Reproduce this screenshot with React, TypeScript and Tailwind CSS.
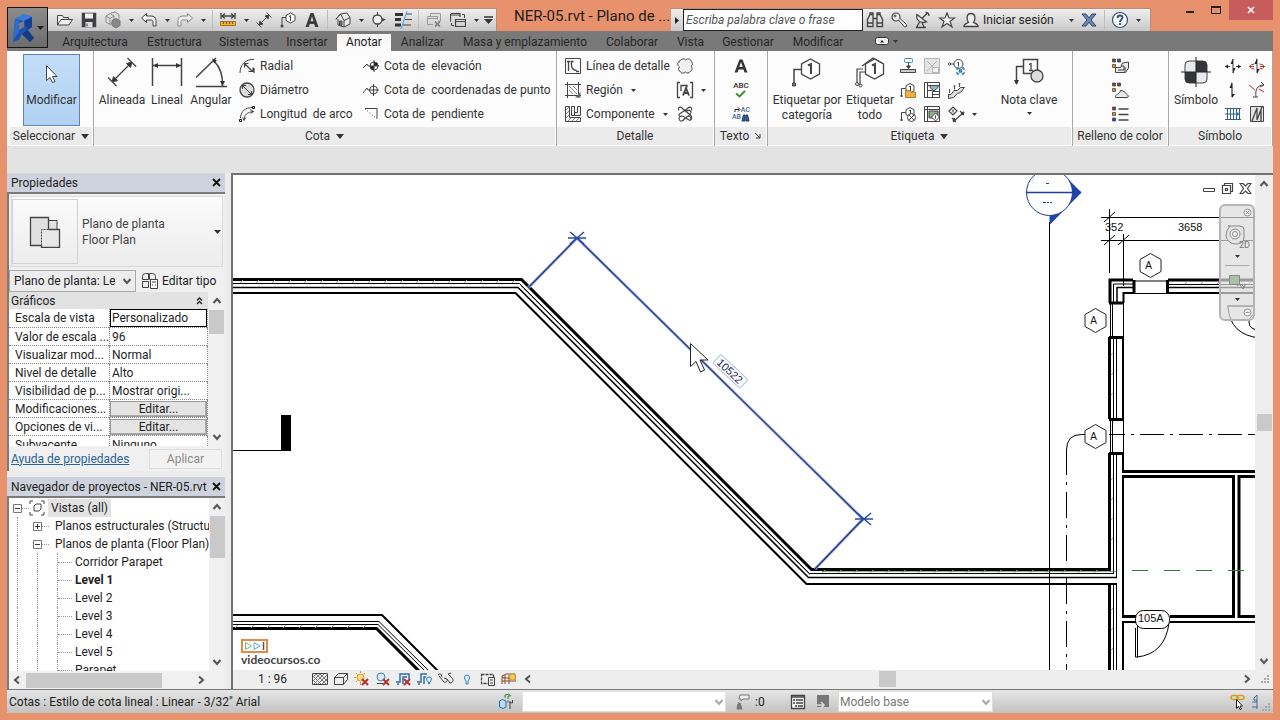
import type { ReactNode } from "react";

type IconProps = { size?: number; w?: number; h?: number; children: ReactNode; color?: string };

function Icon({ size = 18, w, h, children, color = "#444" }: IconProps) {
  return (
    <svg
      width={w ?? size}
      height={h ?? size}
      viewBox={`0 0 ${w ?? size} ${h ?? size}`}
      fill="none"
      stroke={color}
      className="shrink-0"
      aria-hidden="true"
    >
      {children}
    </svg>
  );
}

function Down({ big }: { big?: boolean }) {
  return big ? (
    <Icon w={8} h={5} color="none"><path d="M0 0h8L4 5z" fill="#333" /></Icon>
  ) : (
    <Icon w={5} h={3} color="none"><path d="M0 0h5L2.5 3z" fill="#333" /></Icon>
  );
}

function Tool({ label, children }: { label: string; children: ReactNode }) {
  return (
    <button aria-label={label} className="flex h-full w-6 shrink-0 items-center justify-center">
      {children}
    </button>
  );
}

function Drop({ label }: { label: string }) {
  return (
    <button aria-label={label} className="flex h-full w-3 shrink-0 items-center justify-center">
      <Down />
    </button>
  );
}

function Sep() {
  return <span className="mx-[3px] h-5 w-px shrink-0 bg-[#bdbdbd]" />;
}

function Chevron({ dir }: { dir: "up" | "down" | "left" | "right" }) {
  const paths = {
    up: "M1.5 7L5 3l3.500 4",
    down: "M1.5 3L5 7l3.500-4",
    left: "M7 1.500L3 5l4 3.500",
    right: "M3 1.500L7 5 3 8.500",
  };
  return <Icon size={10} color="#555"><path d={paths[dir]} strokeWidth="2" /></Icon>;
}

/* ---------- quick access bar ---------- */

function QuickAccess() {
  return (
    <div className="ml-[41px] flex h-[23px] w-[449px] shrink-0 items-center self-end border-r border-t border-[#b98c78] bg-linear-to-b from-[#efefef] to-[#c9c9c9] pl-[5px]">
      <Tool label="Abrir">
        <Icon><path d="M1.500 14V4.500h5l1 2h5v2M1.500 14l3.500-5.500h11.500L13 14z" fill="#eee" /></Icon>
      </Tool>
      <Tool label="Guardar">
        <Icon size={16}><path d="M1.500 1.500h13v13h-13z" fill="#3d3d42" strokeWidth="1.500" /><path d="M4 1.500h8v5H4z" fill="#f3f3f3" stroke="none" /><path d="M4.500 10h7v5h-7z" fill="#ddd" stroke="none" /><path d="M6 11.500v3" /></Icon>
      </Tool>
      <Tool label="Sincronizar">
        <Icon color="#8a8a8a"><path d="M2 5l4-2.500L10 5v6l-4 2.500L2 11zM2 5l4 2.500L10 5M6 7.500v6M7 2l4-1 4 2.500v4" fill="#dedede" /><path d="M8 9.500l4-2 4 2v5L12 17l-4-2.500z" fill="#888" stroke="#777" /></Icon>
      </Tool>
      <Drop label="Opciones de sincronizar" />
      <Tool label="Deshacer">
        <Icon w={18} h={16}><path d="M1.500 6l5-4.500V4H11c3 0 5 1.500 5 4.500V14h-3V9.500C13 8.500 12.500 8 11 8H6.500v2.500z" fill="#f5f5f5" /></Icon>
      </Tool>
      <Drop label="Lista deshacer" />
      <Tool label="Rehacer">
        <Icon w={18} h={16} color="#888"><path d="M16.500 6l-5-4.500V4H7C4 4 2 5.500 2 8.500V14h3V9.500C5 8.500 5.500 8 7 8h4.500v2.500z" fill="#eee" /></Icon>
      </Tool>
      <Drop label="Lista rehacer" />
      <Sep />
      <Tool label="Medir">
        <Icon w={18} h={16}><path d="M2 1v6M16 1v6M3 4h12M6 1.500L3 4l3 2.500M12 1.500L15 4l-3 2.500" strokeWidth="1.300" /><path d="M1.500 9.500h15v4h-15z" fill="#e9b23a" stroke="#a8701c" /><path d="M4.500 10v2M7.500 10v2M10.500 10v2M13.500 10v2" stroke="#7a4d10" /></Icon>
      </Tool>
      <Drop label="Opciones de medir" />
      <Tool label="Cota alineada">
        <Icon size={16}><path d="M3 13L13 3M.5 10.500l5 5M10.500.5l5 5" /><path d="M3 13l1-4 3 3zM13 3l-1 4-3-3z" fill="#444" /></Icon>
      </Tool>
      <Tool label="Etiquetar">
        <Icon size={16}><path d="M2 14V5.500h5" /><circle cx="2" cy="14" r="1.500" fill="#444" stroke="none" /><path d="M10.500 1l4.500 2.500v5L10.500 11 6 8.500v-5z" fill="#fff" /><path d="M9 4.500l1.500-1V9" /></Icon>
      </Tool>
      <Tool label="Texto">
        <Icon size={16} color="none"><path d="M1.500 15L6.500 1h3l5 14h-3.300l-1-3h-4.500l-1 3zM6.500 9.300h3L8 4.500z" fill="#3c3c3c" /></Icon>
      </Tool>
      <Sep />
      <Tool label="Vista 3D">
        <Icon size={16}><path d="M1 7l4.500-5L12 1l3 4.500V12l-6 3-6-2V7" fill="#e9e9e9" /><path d="M1 7.500L5.500 2 9 8.500V15M9 8.500l6-3" /><path d="M4.500 9h2.500v4.500L4.500 13z" fill="#777" /></Icon>
      </Tool>
      <Drop label="Opciones de vista 3D" />
      <Tool label="Sección">
        <Icon size={16}><path d="M2.500 3L15 7.500 6 12z" fill="#444" stroke="none" /><circle cx="6.500" cy="7.500" r="4.500" fill="#f2f2f2" strokeWidth="1.300" /><path d="M6.500 12v3M6.500 0v3" /></Icon>
      </Tool>
      <Tool label="Líneas finas">
        <Icon size={18}><path d="M1 3.500h8M1 8.500h6M1 14h6" stroke="#333" strokeWidth="3" /><path d="M12 3h6M11 8.500h7M9 14h8" /><path d="M13 0L7 18" stroke="#4a9be0" /></Icon>
      </Tool>
      <Sep />
      <Tool label="Cerrar ocultas">
        <Icon size={16} color="#999"><path d="M4.500 4V1.500h10V9H12M1.500 4.500h10v3M1.500 4.500v8H7M1.500 6.500h10" /><path d="M9 9.500l5 5M14 9.500l-5 5" stroke="#777" strokeWidth="1.500" /></Icon>
      </Tool>
      <Tool label="Cambiar ventanas">
        <Icon size={16}><path d="M1 1.500h9V5M.5 9.500V2M1 3h9M5.500 7.500h10v7h-10zM5.500 9.500h10" strokeWidth="1.200" /><path d="M12 2.500h2.500V6M4 13.500H1.500V11" /></Icon>
      </Tool>
      <Drop label="Lista de ventanas" />
      <button aria-label="Personalizar" className="flex h-full w-3 items-center justify-center">
        <Icon w={9} h={8} color="#333"><path d="M0 1h9" strokeWidth="1.500" /><path d="M0 3h9L4.500 8z" fill="#333" stroke="none" /></Icon>
      </button>
    </div>
  );
}

function InfoBar() {
  return (
    <div className="flex h-[23px] w-[480px] shrink-0 items-center self-end border-r border-t border-[#b98c78] bg-linear-to-b from-[#efefef] to-[#c9c9c9]">
      <button aria-label="Contraer" className="flex h-full w-3 items-center justify-center">
        <Icon w={4} h={7} color="none"><path d="M0 0l4 3.500L0 7z" fill="#222" /></Icon>
      </button>
      <input
        aria-label="Buscar"
        placeholder="Escriba palabra clave o frase"
        className="h-[22px] w-[180px] border border-[#222] bg-white px-[2px] text-[12px] italic outline-none placeholder:text-[#555]"
      />
      <Tool label="Buscar">
        <Icon size={18}><path d="M1.500 15.500v-7L4 3.500h3V15.500zM16.500 15.500v-7L14 3.500h-3V15.500z" fill="#ddd" strokeWidth="1.300" /><path d="M7 7.500h4M1.500 12H7M11 12h5.500M4 3.500V2h3v1.500M11 3.500V2h3v1.500" strokeWidth="1.300" /></Icon>
      </Tool>
      <Tool label="Suscripción">
        <Icon><circle cx="6" cy="6" r="4" fill="#eee" strokeWidth="1.200" /><circle cx="5" cy="5" r="1" /><path d="M8.500 9l6 7 2-.5v-2L10 7.500" fill="#eee" /></Icon>
      </Tool>
      <Tool label="Centro de comunicación">
        <Icon><path d="M3 3.500c-1.500 5 3 9.500 9.500 7.500z" fill="#eee" strokeWidth="1.300" /><path d="M8 7.500l5-5M5.500 11L2.500 16.500h8L8 12M2 16.500h10M11.500 1.500c2 0 3.500 1.500 3.500 3.500" strokeWidth="1.300" /></Icon>
      </Tool>
      <Tool label="Favoritos">
        <Icon><path d="M9 2l2 5h5.500L12 10.500l2 5.500-5-3.500L4 16l2-5.500L1.500 7H7z" fill="#f5f5f5" strokeWidth="1.200" /></Icon>
      </Tool>
      <Tool label="Usuario">
        <Icon><path d="M2 15.500c0-3 3-3 4.500-4C4.500 9 4 2.500 9 2.500s4.500 6.500 2.500 9c1.500 1 4.500 1 4.500 4z" fill="#eee" strokeWidth="1.300" /></Icon>
      </Tool>
      <button className="w-[82px] whitespace-nowrap text-left text-[12px] leading-4">Iniciar sesión</button>
      <Drop label="Opciones de sesión" />
      <Tool label="Exchange">
        <Icon w={16} h={14} color="#33456e"><path d="M1 1h4l3 4 3-4h4l-5 6 5 6h-4L8 9l-3 4H1l5-6z" fill="#7187b5" /></Icon>
      </Tool>
      <Sep />
      <Tool label="Ayuda">
        <Icon size={18} color="#3b4d74">
          <circle cx="9" cy="9" r="7.500" fill="#f5f7fb" strokeWidth="1.200" />
          <path d="M6.500 7c0-3.500 5-3 5-.5C11.500 8.500 9 8.500 9 11M9 12v2" strokeWidth="1.800" />
        </Icon>
      </Tool>
      <Drop label="Opciones de ayuda" />
    </div>
  );
}

const tabs = [
  { name: "Arquitectura", width: "w-[86px]" },
  { name: "Estructura", width: "w-[73px]" },
  { name: "Sistemas", width: "w-[66px]" },
  { name: "Insertar", width: "w-[60px]" },
  { name: "Anotar", width: "w-[54px]", active: true },
  { name: "Analizar", width: "w-[63px]" },
  { name: "Masa y emplazamiento", width: "w-[142px]" },
  { name: "Colaborar", width: "w-[72px]" },
  { name: "Vista", width: "w-[45px]" },
  { name: "Gestionar", width: "w-[70px]" },
  { name: "Modificar", width: "w-[70px]" },
];

function Header() {
  return (
    <header className="relative shrink-0">
      <div className="flex h-[31px]">
        <QuickAccess />
        <h1 className="min-w-0 flex-1 whitespace-nowrap pl-[17px] text-[15px] leading-8">NER-05.rvt - Plano de ...</h1>
        <InfoBar />
        <div className="ml-[26px] flex h-5 shrink-0">
          <button aria-label="Minimizar" className="flex w-[26px] items-center justify-center">
            <Icon w={8} h={8}><path d="M0 6h8" stroke="#222" strokeWidth="2" /></Icon>
          </button>
          <button aria-label="Maximizar" className="flex w-[26px] items-center justify-center">
            <Icon w={10} h={8} color="#222"><path d="M.5 1h9v6.500h-9z" /><path d="M0 1h10" strokeWidth="2" /></Icon>
          </button>
          <button aria-label="Cerrar" className="flex w-11 items-center justify-center bg-[#c75c5c]">
            <Icon w={8} h={8} color="#fff"><path d="M1 1l6 6M7 1L1 7" strokeWidth="1.500" /></Icon>
          </button>
        </div>
      </div>
      <nav className="flex h-5 bg-[#797979] pl-[45px]">
        {tabs.map((tab) => (
          <button
            key={tab.name}
            className={`shrink-0 whitespace-nowrap text-center text-[12px] leading-4 ${tab.width} ${
              tab.active ? "mt-[3px] bg-linear-to-b from-[#f4f4f4] to-[#fcfcfc] pb-px" : "pt-[2px] text-[#262626]"
            }`}
          >
            {tab.name}
          </button>
        ))}
        <button aria-label="Minimizar cinta" className="ml-[22px] flex items-center gap-1">
          <Icon w={14} h={8} color="#333"><rect x=".5" y=".5" width="13" height="7" rx="2" fill="#eee" /><path d="M5 5.500h4L7 3z" fill="#222" stroke="none" /></Icon>
          <Down />
        </button>
      </nav>
      <button
        aria-label="Menú de la aplicación"
        className="absolute left-0 top-[7px] flex h-[41px] w-[41px] items-center border border-[#151515] bg-linear-to-b from-[#8d8d8d] to-[#6c6c6c] pl-[5px]"
      >
        <svg width="22" height="28" viewBox="0 0 22 28" aria-hidden="true">
          <path d="M2 5l9-5 8 3v10l-4 3 6 8-4 4-8-8-3 6-6 2z" fill="#1d53b4" />
          <path d="M2 5l9-5 8 3-8 4z" fill="#3f7bd8" />
          <path d="M11 7l8-4v10l-5 3z" fill="#153f92" />
          <path d="M2 5l4 2v11l-6 8z" fill="#2e6cce" />
          <path d="M6 9l5-2v6l-5 3z" fill="#7b7b7b" />
          <path d="M9 20l5-4 7 8-4 4z" fill="#133a80" />
        </svg>
        <span className="ml-[2px]"><Icon w={7} h={4} color="none"><path d="M0 0h7L3.500 4z" fill="#222" /></Icon></span>
      </button>
    </header>
  );
}

/* ---------- ribbon ---------- */

type PanelProps = { title: string; width: string; arrow?: boolean; children: ReactNode; corner?: boolean };

function Panel({ title, width, arrow, corner, children }: PanelProps) {
  return (
    <section className={`flex flex-col border-r border-[#a8a8a8] ${width}`}>
      <div className="flex h-[76px] px-[2px] pt-[3px]">{children}</div>
      <h2 className="flex flex-1 items-center justify-center gap-[6px] whitespace-nowrap border-b border-r border-white bg-[#ebebeb] text-[12px] leading-4">
        {title}
        {arrow && <Down big />}
        {corner && <Icon w={6} h={6} color="#333"><path d="M0 0l5 5M5 1v4H1" /></Icon>}
      </h2>
    </section>
  );
}

function BigTool({ label, width, icon, drop }: { label: string; width: string; icon: ReactNode; drop?: boolean }) {
  return (
    <button className={`flex h-[70px] shrink-0 flex-col items-center text-[12px] leading-[15px] ${width}`}>
      <span className="flex h-[39px] items-start pt-[2px]">{icon}</span>
      <span className="whitespace-pre">{label}</span>
      {drop && <span className="mt-1"><Down /></span>}
    </button>
  );
}

function SmallTool({ label, icon, drop }: { label: string; icon: ReactNode; drop?: boolean }) {
  return (
    <button className="flex h-6 items-center whitespace-pre text-[12px] leading-4">
      <span className="flex w-6 justify-center pr-[2px]">{icon}</span>
      {label}
      {drop && <span className="ml-2"><Down /></span>}
    </button>
  );
}

function IconColumn({ icons, label }: { icons: ReactNode[]; label: string }) {
  return (
    <div className="flex w-6 shrink-0 flex-col">
      {icons.map((icon, i) => (
        <button key={i} aria-label={`${label} ${i + 1}`} className="flex h-6 items-center justify-center">
          {icon}
        </button>
      ))}
    </div>
  );
}

function SelectPanel() {
  return (
    <Panel title="Seleccionar" width="w-[84px]" arrow>
      <button className="ml-[11px] flex h-[72px] w-[57px] flex-col items-center border border-[#5b86b5] bg-linear-to-b from-[#c2ddf7] to-[#b2d2f3] text-[12px] leading-[15px]">
        <span className="flex h-[38px] items-center">
          <Icon w={13} h={20}><path d="M1.500 1.500v15l3.500-3 2.500 5 2.500-1L7.500 12.500h4.500z" fill="#fff" /></Icon>
        </span>
        Modificar
      </button>
    </Panel>
  );
}

function DimensionPanel() {
  return (
    <Panel title="Cota" width="w-[463px]" arrow>
      <BigTool
        label="Alineada"
        width="w-[52px]"
        icon={<Icon size={32}><path d="M6 26L26 6M2 21.500l8.500 8.500M21.500 2l8.500 8.500" strokeWidth="1.300" /><path d="M6 26l1.500-5.500 4 4zM26 6l-1.500 5.500-4-4z" fill="#333" /></Icon>}
      />
      <BigTool
        label="Lineal"
        width="w-[38px]"
        icon={<Icon size={32}><path d="M1.500 2v28M30.500 2v28M2 9.500h28" strokeWidth="1.500" /><path d="M2 9.500L7 7v5zM30 9.500L25 7v5z" fill="#333" stroke="none" /></Icon>}
      />
      <BigTool
        label="Angular"
        width="w-[50px]"
        icon={<Icon size={32}><path d="M1 21.500L21 2M1 30.500h31M19 5c6 6 9 14 8.500 25" strokeWidth="1.500" /><path d="M17 2.500l5 2-3 3zM27.500 30l-2.500-5h5z" fill="#333" stroke="none" /></Icon>}
      />
      <div className="flex w-[124px] shrink-0 flex-col">
        <SmallTool label="Radial" icon={<Icon size={16}><path d="M1 15C1 6 7 1 15 1.500" /><path d="M5 5l8 8M5.500 9.500V5.500h4M15 10v5M9.500 13.500h4.500v-4" strokeWidth="1.200" /></Icon>} />
        <SmallTool label="Diámetro" icon={<Icon size={16}><circle cx="8" cy="8" r="7" fill="#dcdcdc" strokeWidth="1.300" /><path d="M3.500 3.500l9 9M3.500 7V3.500H7M12.500 9v3.500H9" /></Icon>} />
        <SmallTool label="Longitud  de arco" icon={<Icon size={16}><path d="M1.500 12C2 5 6 2 13 1.500M5 14c0-5 3-8 10-8.500M3.500 11.500l1.500 3 2-3M11 3.500l3.500 2-3 2" /><path d="M.5 13.500h2v2h-2zM13.500.5h2v2h-2z" stroke="#111" fill="#fff" /></Icon>} />
      </div>
      <div className="flex flex-col">
        <SmallTool label="Cota de  elevación" icon={<Icon size={16}><path d="M0 10l4-4 1 2h11M11 2v12" /><circle cx="11" cy="8" r="4" fill="#fff" /><path d="M11 4a4 4 0 0 1 4 4h-4zM11 12a4 4 0 0 1-4-4h4z" fill="#222" /></Icon>} />
        <SmallTool label="Cota de  coordenadas de punto" icon={<Icon size={16}><path d="M0 11l4-5 1 2h11M10.500 2v12" /><circle cx="10.500" cy="8" r="4" /></Icon>} />
        <SmallTool label="Cota de  pendiente" icon={<Icon size={16}><path d="M2 2.500h12v10" /><path d="M2 3l12 10" strokeDasharray="1 2" /></Icon>} />
      </div>
    </Panel>
  );
}

function DetailPanel() {
  return (
    <Panel title="Detalle" width="w-[158px]">
      <div className="ml-[3px] flex w-[111px] shrink-0 flex-col">
        <SmallTool label="Línea de detalle" icon={<Icon size={16}><path d="M.5.5h15v15H.5z" /><path d="M3.500 13V4M6.500 4v3c0 3 2 5 5 5.500M2 3.500h3M5.500 3.500h3M11 13.500h3" strokeWidth="1.300" /></Icon>} />
        <SmallTool label="Región" drop icon={<Icon size={16}><path d="M2.500 0v16M13.500 0v16M0 2.500h16M0 13.500h16" /><path d="M4 8l4 4M4 4l8 8M8 4l4 4" stroke="#888" /><path d="M15.500 10v5.500H10z" fill="#666" stroke="none" /></Icon>} />
        <SmallTool label="Componente" drop icon={<Icon size={16}><path d="M.5.500h4v11h11v4H.5zM6.500.500h3v9M12.500.500h3v9h-9v-9M9.500.5v6h3v-6" fill="#f1f1f1" /><path d="M1 4l3-3M1 8l3-3M1 12l3-3M3 15l3-3M7 15l3-3M11 15l3-3" stroke="#888" /></Icon>} />
      </div>
      <IconColumn
        label="Detalle"
        icons={[
          <Icon size={18}><path d="M5 3c2-2 4-1 4.500 0C12 1 15 2 15 4c2 2 2 4 0 5 2 2 1 5-1 5.500-1 2-3 2-4.500.5-2 2-5 1-5.500-1-2 0-2-3-.5-4C1 8 1 5 3.500 5 3 4 4 3 5 3z" fill="#f1f1f1" /></Icon>,
          <Icon size={18}><path d="M4 1.500H1.500v15H4M14 1.500h2.500v15H14M5 10V4.500h6v2" strokeWidth="1.300" /><path d="M7 14.500l3-7.500 3 7.500M8 12h4" strokeWidth="1.800" /></Icon>,
          <Icon size={18}><path d="M3 5.500C1 3 4 1 6 3s6 5 8.500 7 1 6-1.500 5-5-4-7-4-4 2-2.500 4 3 1 5-1 7-5 6.500-7-3-2-5-1M15 5.500C17 3 14 1 12 3S6 7 3.500 9c-1.500 1.500 0 3 2.500 2M12 11c2 0 4 2 2.500 4" strokeWidth="1.100" /></Icon>,
        ]}
      />
      <button aria-label="Grupo de detalle" className="flex h-[72px] w-3 items-center justify-center"><Down /></button>
    </Panel>
  );
}

function TextPanel() {
  return (
    <Panel title="Texto" width="w-[53px]" corner>
      <div className="flex flex-1 justify-center">
        <IconColumn
          label="Texto"
          icons={[
            <Icon size={16} color="none"><path d="M1.500 14.500L6.500 1.500h3l5 13h-3l-1-3h-5l-1 3zM6.300 9h3.400L8 4z" fill="#333" /></Icon>,
            <span className="flex flex-col items-center text-[8px] font-medium leading-[8px] text-[#333]">
              ABC
              <Icon w={11} h={8} color="#3f8f2e"><path d="M1 3.500l3.500 3L10 1" strokeWidth="2" /></Icon>
            </span>,
            <span className="flex flex-col items-end text-[7px] font-medium leading-[7px] text-[#3d6a94]">
              <span className="flex items-center"><Icon w={7} h={6} color="#222"><path d="M1 5V2.500h4M4 .5l2 2-2 2" /></Icon>AC</span>
              <span className="flex items-center">AB<Icon w={9} h={8} color="#16305a"><path d="M1 7l1.500-6h1.500v6zM8 7L6.500 1H5v6z" fill="#3b6aa8" /></Icon></span>
            </span>,
          ]}
        />
      </div>
    </Panel>
  );
}

const tagMini = (
  <g><path d="M1.500 14V6.500h4" /><path d="M10 1.500l4 2.200v5L10 11 6 8.700v-5z" fill="#fff" /><path d="M9 5l1.500-1v5" /><path d="M.5 14h2" strokeWidth="2" /></g>
);

function TagPanel() {
  return (
    <Panel title="Etiqueta" width="w-[305px]" arrow>
      <BigTool
        label={"Etiquetar por\ncategoría"}
        width="w-[74px]"
        icon={<Icon size={32} w={36}><path d="M5 27V13.500h7" strokeWidth="1.500" /><path d="M3.500 27h3v3h-3z" fill="#777" /><path d="M21.500 3l9 5v10l-9 5-9-5V8z" fill="#fff" strokeWidth="1.300" /><path d="M19 9.500l3-1.500v10" strokeWidth="2" /></Icon>}
      />
      <BigTool
        label={"Etiquetar\ntodo"}
        width="w-[52px]"
        icon={<Icon size={32}><path d="M3 27V13h6M6 29V16h6M8 10l11-8 9 5" strokeWidth="1.200" /><circle cx="3" cy="28" r="1.500" /><circle cx="6.500" cy="29.500" r="1.500" /><path d="M20.500 3l9 5v10l-9 5-9-5V8z" fill="#fff" strokeWidth="1.300" /><path d="M18 9.500l3-1.500v10" strokeWidth="2" /></Icon>}
      />
      <IconColumn
        label="Etiqueta"
        icons={[
          <Icon size={16}><rect x="4.500" y=".5" width="8" height="4" rx="1" stroke="#3c8cc8" /><path d="M8.500 5v5M6.500 8h4l-2 2.500z" fill="#222" /><path d="M.5 11.500h15v3H.500z" fill="#ccc" /></Icon>,
          <Icon size={16}>{tagMini}<path d="M5.500 15.500v-7h4l1 1.500h5v5.500z" fill="#f0b04c" stroke="#b97a1d" /></Icon>,
          <Icon size={16}>{tagMini}<circle cx="11.500" cy="11.500" r="4" fill="#fff" /><path d="M9 9l5 5M14 9l-5 5" /></Icon>,
        ]}
      />
      <IconColumn
        label="Etiqueta de habitación"
        icons={[
          <Icon size={16} color="#b5b5b5"><path d="M.5.5h15v15H.5zM3 3l10 10M13 3L3 13" fill="#e4e4e4" /><path d="M8.500 9.500h6v5h-6z" fill="#f4f4f4" /></Icon>,
          <Icon size={16}><path d="M.5.500h15v15H.5z" fill="#fff" /><path d="M3.500.5v15M3.500 3.500h12M3.500 8.500h5" /><path d="M6 3.500h8v2L10 9 6 5.500z" fill="#8fb4cc" /><path d="M8.500 9.500h7v6h-7zM8.500 12.500h7" fill="#fff" /></Icon>,
          <Icon size={16}><path d="M.5.500h15v15H.5zM.5 3.500h15M3.500.5v15" fill="#fff" /><path d="M5 5h9v7H5z" fill="#8fb08a" /><path d="M11.500 7l4 4-4 4-4-4z" fill="#fff" /><path d="M11.500 9.500v3" /></Icon>,
        ]}
      />
      <IconColumn
        label="Etiqueta de vista"
        icons={[
          <Icon size={17}><circle cx="1.500" cy="6" r="1.200" /><path d="M3 6h3" /><circle cx="10.500" cy="6" r="4.500" fill="#fff" /><path d="M9.500 5l1-1v4.500" /><path d="M9 10h2M9 16h2M14 10h2M14 16h2M9 10v2M16 10v2M9 14v2M16 14v2M11.500 12h2v2h-2z" stroke="#2a78b8" strokeWidth="1.300" /></Icon>,
          <Icon size={17}><path d="M.5 12.500v4l5-1 4-4 3-1 4-5h-4l-3 3H6l-3 4z" fill="#ddd" /><path d="M1.500 7v4M6.500 3.500v4M11.500 1v4M5.500 4h2M10.500 1.500h2" stroke="#555" /></Icon>,
          <Icon size={17}><path d="M5 1l4 4-4 4-4-4zM5 3.500v3M5 16L16 6M4 12l4 4M12 5l4 4" strokeWidth="1.200" /><path d="M5 15l1-3 2 2zM16 6l-1 3-2-2z" fill="#333" /></Icon>,
        ]}
      />
      <div className="flex w-3 items-end pb-[11px]"><button aria-label="Más etiquetas" className="px-1"><Down /></button></div>
      <span className="ml-[6px] h-[71px] w-px bg-[#c8c8c8]" />
      <BigTool
        label="Nota clave"
        width="w-[86px]"
        drop
        icon={<Icon size={32}><path d="M3.500 28V10.500h7M10.500 3.500h14v14h-14z" strokeWidth="1.500" /><path d="M1 24h5l-2.500 5z" fill="#333" stroke="none" /><path d="M16 8.500l2-1v7M16 14.500h4" strokeWidth="1.300" /><circle cx="24" cy="20" r="6" fill="#dcdcdc" strokeWidth="1.300" /></Icon>}
      />
    </Panel>
  );
}

const swatches = (
  <g stroke="#4a4a4a" strokeWidth=".8"><path d="M.5 1h3v3h-3z" fill="#8d3b35" /><path d="M.5 6.500h3v3h-3z" fill="#e0952c" /></g>
);

function ColorFillPanel() {
  return (
    <Panel title="Relleno de color" width="w-[96px]">
      <div className="flex flex-1 justify-center">
        <IconColumn
          label="Relleno"
          icons={[
            <Icon size={17}>{swatches}<path d="M5.500 1h3v3h-3z" fill="#35598a" strokeWidth=".8" /><path d="M3.500 9.500h5l2-4.500 6-1v6l-3 4.500h-10z" fill="#e8e8e8" /><path d="M6 12h6V8h-3M13 9v5" /></Icon>,
            <Icon size={17}>{swatches}<path d="M5.500 1h3v3h-3z" fill="#8d3b35" strokeWidth=".8" /><path d="M3.500 15.500c-1-4 4-2 5-7l3 .5 5 5-1 1.500z" fill="#e8e8e8" /></Icon>,
            <Icon size={17}>{swatches}<path d="M.5 12h3v3h-3z" fill="#34528e" strokeWidth=".8" /><path d="M6.500 3h10M6.500 8.500h10M6.500 14h10" strokeWidth="1.300" /></Icon>,
          ]}
        />
      </div>
    </Panel>
  );
}

function SymbolPanel() {
  return (
    <Panel title="Símbolo" width="min-w-0 flex-1">
      <BigTool
        label="Símbolo"
        width="w-[50px]"
        icon={<Icon size={32}><rect x="5" y="5" width="22" height="22" rx="4" fill="#e9eaec" /><path d="M16 5h7q4 0 4 4v7H16zM5 16h11v11H9q-4 0-4-4z" fill="#34353a" stroke="none" /><path d="M16 1v30M1 16h30" stroke="#222" /></Icon>}
      />
      <IconColumn
        label="Símbolo"
        icons={[
          <Icon size={16}><path d="M8 1v14M8 1l-2 5M8 15l2-5M0 8.500h5M11 8.500h5" /><path d="M3 6.500v4l-3-2zM13 6.500v4l3-2zM8 1v5H6zM8 15v-5h2z" fill="#222" stroke="none" /></Icon>,
          <Icon size={16}><path d="M7 1v14" strokeWidth="1.300" /><path d="M7 0v6H4.500zM7 16v-4h3z" fill="#222" stroke="none" /></Icon>,
          <Icon size={16}><path d="M0 2.500h16M0 13.500h16M0 8h12M2.500 2v12M5.500 2v12M8.500 2v12M11.500 2v12M14.500 2v12" stroke="#30627f" /><path d="M11 5.500l4 2.500-4 2.500z" fill="#2a78b8" stroke="none" /></Icon>,
        ]}
      />
      <IconColumn
        label="Símbolo estructural"
        icons={[
          <Icon size={16}><path d="M8 1v14" /><path d="M8 0v6H5.500zM8 16v-5h2.500z" fill="#222" stroke="none" /><path d="M5.500 6Q2 6 .5 8.500 2 11 5.500 11M10.500 6q3.500 0 5 2.500Q14 11 10.500 11M0 8.500h5M11 8.500h5" stroke="#b33" /></Icon>,
          <Icon size={16}><path d="M15 3c-7 0-9 5-8 12M4 15h5M12 0l3 3-4 2" /><path d="M0 3l6 5M10 7l5 3" stroke="#b33" /></Icon>,
          <Icon size={16}><path d="M1.500.5h13v15h-13z" fill="#e3e3e3" /><path d="M3 15L8 2v12l5-13M12 15V3" strokeWidth="1.300" /></Icon>,
        ]}
      />
    </Panel>
  );
}

/* ---------- properties ---------- */

function PaletteTitle({ children }: { children: ReactNode }) {
  return (
    <div className="flex h-[19px] shrink-0 items-center justify-between bg-[#cdd2dc] pl-1 pr-1">
      <h2 className="whitespace-nowrap text-[12px] leading-4">{children}</h2>
      <button aria-label="Cerrar paleta">
        <Icon w={9} h={9} color="#111"><path d="M1 1l7 7M8 1L1 8" strokeWidth="1.800" /></Icon>
      </button>
    </div>
  );
}

const properties = [
  { name: "Escala de vista", value: "Personalizado", selected: true },
  { name: "Valor de escala ...", value: "96" },
  { name: "Visualizar mod...", value: "Normal" },
  { name: "Nivel de detalle", value: "Alto" },
  { name: "Visibilidad de p...", value: "Mostrar origi..." },
  { name: "Modificaciones...", value: "Editar...", edit: true },
  { name: "Opciones de vi...", value: "Editar...", edit: true },
  { name: "Subyacente", value: "Ninguno" },
];

function Properties() {
  return (
    <section className="flex h-[298px] shrink-0 flex-col">
      <PaletteTitle>Propiedades</PaletteTitle>
      <div className="flex min-h-0 flex-1 flex-col border-l-2 border-t-2 border-[#7b7b7b] bg-[#f0f0f0]">
        <div className="m-[2px] flex h-[71px] shrink-0 items-center border border-[#dadada] bg-linear-to-b from-[#fbfbfb] to-[#ececec]">
          <div className="flex h-[65px] w-[66px] items-center justify-center border border-[#d6cfd8]">
            <Icon size={32}>
              <path d="M19 4.500h9v10h-9z" fill="#e2e2e2" />
              <path d="M1.500 1.500h18v28h-18z" fill="#e0e0e0" strokeWidth="1.300" />
              <path d="M12.500 13.500h18v18h-18z" fill="#e8e8e8" stroke="none" />
              <path d="M19.500 13.500h11v18h-18v-2" strokeWidth="1.300" />
              <path d="M19.500 13.500h-7v16" strokeDasharray="2 1" />
            </Icon>
          </div>
          <p className="ml-1 flex-1 text-[12px] leading-4 text-[#444]">Plano de planta<br />Floor Plan</p>
          <button aria-label="Cambiar tipo" className="px-[1px]"><Icon w={7} h={4} color="none"><path d="M0 0h7L3.500 4z" fill="#333" /></Icon></button>
        </div>
        <div className="flex h-[23px] shrink-0 items-center">
          <div className="relative h-[22px] w-[127px]">
            <select aria-label="Filtro de propiedades" className="h-full w-full appearance-none overflow-hidden border border-[#aaa] bg-[#ececec] pl-1 pr-5 text-[12px]">
              <option>Plano de planta: Level 1</option>
            </select>
            <span className="pointer-events-none absolute right-1 top-[6px]"><Chevron dir="down" /></span>
          </div>
          <button className="ml-[6px] flex items-center gap-1 whitespace-nowrap text-[12px] leading-4">
            <Icon size={16}><path d="M.5 3.500q0-3 3-3h3v6h-6zM7.500.5h3q3 0 3 3v3h-6zM.500 8.500h6v6h-6z" /><path d="M8.500 6.500h7v9h-7zM10 9h4M10 12h1M13 12h1" fill="#fff" /></Icon>
            Editar tipo
          </button>
        </div>
        <div className="flex min-h-0 flex-1">
          <div className="min-w-0 flex-1 overflow-hidden bg-white">
            <div className="flex h-[17px] items-center justify-between bg-[#e2e2e2] pl-[2px] pr-[5px] text-[12px] leading-4">
              Gráficos
              <Icon w={7} h={8} color="#222"><path d="M1 3.500L3.500 1 6 3.500M1 7l2.500-2.500L6 7" strokeWidth="1.300" /></Icon>
            </div>
            <table className="w-full table-fixed border-collapse text-[12px] leading-4">
              <tbody>
                {properties.map((row) => (
                  <tr key={row.name} className="h-[18px] border-b border-dotted border-[#888]">
                    <th className="overflow-hidden whitespace-nowrap border-r border-dotted border-[#888] p-0 pl-[6px] text-left font-normal">
                      {row.name}
                    </th>
                    <td className="w-[98px] overflow-hidden whitespace-nowrap border-r border-dotted border-[#888] p-0">
                      {row.edit ? (
                        <button className="block h-4 w-full border border-[#999] bg-[#e4e4e4] leading-[14px] shadow-[inset_-1px_-1px_0_#aaa]">
                          {row.value}
                        </button>
                      ) : (
                        <div className={row.selected ? "border border-black px-px leading-4" : "px-[2px]"}>{row.value}</div>
                      )}
                    </td>
                  </tr>
                ))}
              </tbody>
            </table>
          </div>
          <div className="flex w-[17px] flex-col items-center bg-[#f0f0f0] pb-1 pt-1">
            <Chevron dir="up" />
            <div className="mt-1 h-6 w-[15px] bg-[#c9c9c9]" />
            <span className="mt-auto"><Chevron dir="down" /></span>
          </div>
        </div>
        <div className="flex h-[25px] shrink-0 items-center justify-between pl-[2px] pr-[3px] text-[12px]">
          <a href="#ayuda" className="whitespace-nowrap text-[#2a6496] underline">Ayuda de propiedades</a>
          <button className="h-5 w-[73px] border border-[#ddd] bg-[#f2f2f2] leading-4 text-[#8a8a8a]">Aplicar</button>
        </div>
      </div>
    </section>
  );
}

/* ---------- project browser ---------- */

function Guide() {
  return (
    <span className="h-[18px] w-5 shrink-0 pl-2">
      <span className="block h-full border-l border-dotted border-[#999]" />
    </span>
  );
}

function Toggle({ open }: { open?: boolean }) {
  return (
    <span className="flex w-5 shrink-0 items-center pl-1">
      <Icon w={9} h={9} color="#777"><path d="M.5.500h8v8h-8z" fill="#fff" /><path d={open ? "M2 4.500h5" : "M2 4.500h5M4.500 2v5"} stroke="#333" /></Icon>
      <span className="h-px flex-1 border-t border-dotted border-[#999]" />
    </span>
  );
}

const levels = ["Corridor Parapet", "Level 1", "Level 2", "Level 3", "Level 4", "Level 5", "Parapet"];

function Browser() {
  return (
    <section className="mt-[6px] flex min-h-0 flex-1 flex-col">
      <PaletteTitle>Navegador de proyectos - NER-05.rvt</PaletteTitle>
      <div className="flex min-h-0 flex-1 flex-col border-l-2 border-t-2 border-[#7b7b7b] bg-white">
        <div className="flex min-h-0 flex-1">
          <ul className="min-w-0 flex-1 overflow-hidden whitespace-nowrap pt-px text-[12px] leading-[18px]">
            <li className="flex h-[18px] items-center">
              <Toggle open />
              <Icon size={16}><path d="M1 4V1h3M12 1h3v3M1 12v3h3M12 15h3v-3M5 6l2-2h5v5l-2 2H5z" /></Icon>
              <span className="ml-[3px] bg-[#e3e3e3] px-[3px]">Vistas (all)</span>
            </li>
            <li className="flex h-[18px] items-center"><Guide /><Toggle /><span className="pl-[6px]">Planos estructurales (Structur</span></li>
            <li className="flex h-[18px] items-center"><Guide /><Toggle open /><span className="pl-[6px]">Planos de planta (Floor Plan)</span></li>
            {levels.map((level) => (
              <li key={level} className="flex h-[18px] items-center">
                <Guide />
                <Guide />
                <span className="h-[18px] w-[26px] shrink-0 pl-2">
                  <span className="flex h-full items-center border-l border-dotted border-[#999]">
                    <span className="w-[14px] border-t border-dotted border-[#999]" />
                  </span>
                </span>
                <span className={level === "Level 1" ? "font-bold" : ""}>{level}</span>
              </li>
            ))}
          </ul>
          <div className="flex w-4 flex-col items-center bg-[#f0f0f0] pb-1 pt-1">
            <Chevron dir="up" />
            <div className="mt-1 h-[42px] w-[15px] bg-[#c9c9c9]" />
            <span className="mt-auto"><Chevron dir="down" /></span>
          </div>
        </div>
        <div className="flex h-[18px] shrink-0 items-center bg-[#f0f0f0] pl-[3px] pr-[19px]">
          <Chevron dir="left" />
          <div className="ml-[4px] h-[15px] w-[136px] bg-[#c9c9c9]" />
          <span className="ml-auto"><Chevron dir="right" /></span>
        </div>
      </div>
    </section>
  );
}

/* ---------- drawing area ---------- */

function HexTag({ x, y }: { x: number; y: number }) {
  return (
    <g>
      <path d={`M${x} ${y - 12}l10.500 6v12l-10.500 6-10.500-6v-12z`} fill="#fff" stroke="#222" />
      <text x={x - 2} y={y + 3} fontSize="10" textAnchor="middle" fill="#111" stroke="none">A</text>
    </g>
  );
}

function Asterisk({ x, y }: { x: number; y: number }) {
  return <path d={`M${x - 9} ${y}h18M${x - 7} ${y - 6}l14 12M${x - 7} ${y + 6}l14-12`} stroke="#2a4a9c" strokeWidth="1.500" />;
}

function hatch(x1: number, x2: number, y: number) {
  let d = "";
  for (let x = x1; x < x2; x += 16) d += `M${x} ${y}l3-3`;
  return d;
}

function FloorPlan() {
  return (
    <svg width="100%" height="100%" className="absolute inset-0" fontFamily="Liberation Sans, sans-serif" role="img" aria-label="Plano de planta">
      <g transform="translate(-233 -175)" fill="none" stroke="#000">
        {/* main diagonal wall */}
        <path d="M233 279.500H521.500L811.500 569.500H1111" strokeWidth="3" />
        <path d="M233 283.500H519.500L809.500 573.500H1114" />
        <path d="M233 287.500H518L808.500 577.500H1117" strokeWidth="1.500" />
        <path d="M520.500 285.500L810 575" stroke="#555" strokeWidth=".7" />
        <path d="M233 293H515.500L806.500 584H1117" strokeWidth="2" />
        <path d={hatch(240, 515, 283) + hatch(822, 1100, 573)} stroke="#999" />

        {/* lower left wall */}
        <path d="M233 615H382L440 673" strokeWidth="2" />
        <path d="M233 621.500H379L431 673" />
        <path d="M233 624.500H378L427 673" />
        <path d="M233 628.500H376.500L421 673" strokeWidth="3" />
        <path d={hatch(235, 375, 628)} stroke="#999" />
        <path d="M233 450.500h49" />
        <path d="M281 415h10v36h-10z" fill="#000" stroke="none" />

        {/* section mark */}
        <path d="M1065 176L1081.500 192.500L1049.500 225V205z" fill="#1f44ac" stroke="none" />
        <circle cx="1049.500" cy="192.500" r="23" fill="#fff" stroke="#1f3f9c" />
        <path d="M1026 192.500h55" stroke="#1f3f9c" strokeWidth="1.500" />
        <path d="M1046 183.500h3M1043 202.500h3M1047 202.500h2M1050 202.500h2" stroke="#1f3f9c" />
        <path d="M1049.500 222V673" />

        {/* dimensions at the top right */}
        <path d="M1101 217.500H1260M1101 240.500H1260M1109.500 209v64M1123.500 234v52" />
        <path d="M1104 222l11-10M1104 245l11-10M1118 245l11-10" />

        {/* right building shell */}
        <path d="M1133 280H1110V303M1168 280H1260" strokeWidth="3" />
        <path d="M1133 284H1113.500V303M1168 284.500H1260" />
        <path d="M1133 287.500H1117V303M1168 287.500H1260" strokeWidth="1.500" />
        <path d="M1134 293H1123.500V303M1167 293H1260" strokeWidth="2" />
        <path d="M1134 280v13M1167.500 280v13M1109 303h15M1109 337.500h15M1109 419.500h15M1109 453.500h15" strokeWidth="3" />
        <path d="M1134 281h33M1134 293.500h33M1110.500 303v34M1112.500 303v34M1123.500 303v34M1110.500 419v34M1112.500 419v34M1123.500 419v34" />
        <path d="M1109.500 337v82M1109.500 453v117M1109.500 584v89" strokeWidth="3" />
        <path d="M1113.500 337v82M1116.500 337v82M1113.500 453v120M1116.500 453v125M1113.500 584v89M1116.500 584v89" />
        <path d="M1111 355l2-2M1111 375l2-2M1111 395l2-2M1111 480l2-2M1111 500l2-2M1111 520l2-2M1111 540l2-2M1111 610l2-2M1111 630l2-2M1111 650l2-2" stroke="#999" />
        <path d={hatch(1185, 1250, 284)} stroke="#999" />
        <path d="M1123 337v82M1123 453v19M1123 476v141M1123 622v51M1122 622H1136M1170 622H1260" strokeWidth="2" />
        <path d="M1122 471.500H1260M1122 476.500H1233.500V616.500H1170M1260 476.500H1239V616.500H1260M1122 616.500H1136" strokeWidth="3" />

        {/* path of travel */}
        <path d="M1066.500 475V450q0-15.500 15-15.500H1085" />
        <path d="M1066.500 482V673" strokeDasharray="3 7 26 7" />
        <path d="M1109 434.500H1260" strokeDasharray="16 6 3 6 24 6 3 6 24 6 3 6 24 6" />
        <path d="M822 571.500H1116" stroke="#3b7a3b" strokeWidth=".6" />
        <path d="M1132 570.500H1250" stroke="#2c7a2c" strokeDasharray="16 16" />

        {/* door, room tag and basin */}
        <path d="M1135.500 628v29h2v-35M1137 657q28-3 32-34" />
        <rect x="1135.500" y="610.500" width="34" height="18" rx="8" fill="#fff" />
        <path d="M1227 306h33" stroke="#555" strokeWidth="2" />
        <path d="M1228 307q2 28 32 31M1260 313q-11 1-11 9t11 8" />

        <HexTag x={1150.500} y={265.500} />
        <HexTag x={1095.500} y={320.500} />
        <HexTag x={1095.500} y={436.500} />

        <g fill="#111" stroke="none" fontSize="11">
          <text x="1105" y="231">352</text>
          <text x="1178" y="231">3658</text>
          <text x="1138" y="622">105A</text>
        </g>

        {/* aligned dimension being placed */}
        <g>
          <path d="M528 288L577 238L863 519L815 569" stroke="#9fb2e2" strokeWidth="3" />
          <path d="M528 288L577 238L863 519L815 569" stroke="#22307a" strokeWidth="1.200" />
          <Asterisk x={577} y={238} />
          <Asterisk x={864} y={519} />
          <g transform="translate(730 371) rotate(43)">
            <rect x="-18" y="-6" width="37" height="12" rx="1" fill="#fbfcff" stroke="#b9c3de" />
            <text x="0" y="4" fontSize="11" textAnchor="middle" fill="#16264f" stroke="none">10522</text>
          </g>
          <path d="M690.500 343.500v23l5.500-5 4.500 10.500 4-2-4.500-10h8z" fill="#fff" stroke="#222" />
        </g>
      </g>
    </svg>
  );
}

function NavigationBar() {
  return (
    <div className="absolute right-0 top-[29px] flex h-[117px] w-[36px] flex-col items-center justify-between rounded-md border-2 border-[#b4b4b4] bg-[#dcdcdc]/70 py-[2px]">
      <button aria-label="Cerrar barra" className="mr-[1px] self-end"><Icon size={9} color="#999"><circle cx="4.500" cy="4.500" r="3.500" fill="#eee" /><path d="M3 3l3 3M6 3L3 6" /></Icon></button>
      <button aria-label="Rueda 2D" className="relative">
        <Icon w={26} h={24} color="#888"><path d="M4 2h12q4 0 4 4v7q0 7-8 7T2 12q0-6 4-10z" fill="#e4e4e4" /><circle cx="11" cy="10" r="5" fill="#f4f4f4" /><circle cx="11" cy="10" r="2.500" /></Icon>
        <span className="absolute -bottom-[2px] right-0 text-[9px] leading-[9px] text-[#777]">2D</span>
      </button>
      <Down />
      <span className="h-px w-6 bg-[#aaa]" />
      <button aria-label="Zoom"><Icon w={20} h={18} color="#888"><path d="M2.500 2.500h10v9h-10z" fill="#a9bfa8" /><path d="M10 13q2-3 5-1l3 3M13 12l3 4 2-4" /></Icon></button>
      <Down />
      <button aria-label="Opciones de barra" className="mr-[1px] self-end"><Icon size={9} color="#999"><circle cx="4.500" cy="4.500" r="3.500" fill="#eee" /><path d="M2.500 4.500h4" /></Icon></button>
    </div>
  );
}

const redX = <path d="M8 8l6 6M14 8l-6 6" stroke="#b8322a" strokeWidth="2" />;
const bulb = <path d="M11.500 13v-2q-2-1-2-3t2.500-2 2.500 2-2 3v2z" stroke="#3b83c0" fill="#d8ebf8" />;

const viewTools = [
  { label: "Estilo visual", icon: <g><path d="M.5 2.500h15v11H.5z" fill="#eee" /><path d="M1 6l3-3M1 10l7-7M2 13L12 3M6 13l9-9M10 13l5-5M4 3l10 10M8 3l7 7M1 5l8 8M1 9l4 4" stroke="#777" /></g> },
  { label: "Modelo", icon: <path d="M1.500 6.500l4-4h9v6l-4 5h-9zM1.500 6.500h9v7M10.500 6.500l4-4" fill="#eee" /> },
  { label: "Sol", icon: <g><circle cx="6.500" cy="6.500" r="3.500" fill="#fbdf86" stroke="#d99a2b" /><path d="M6.500 0v2M6.500 11v3M0 6.500h2M2 2l1.500 1.500M11 2L9.500 3.500M2 11l1.500-1.500" stroke="#d99a2b" />{redX}</g> },
  { label: "Sombras", icon: <g><circle cx="6" cy="6" r="4" fill="#d9ecf8" stroke="#3b83c0" /><path d="M2 12.500h6" />{redX}</g> },
  { label: "Recortar", icon: <g><path d="M0 11h4V3h9v5M7 13V6h4M1 13h2" stroke="#2f6ea5" strokeWidth="1.500" />{redX}</g> },
  { label: "Mostrar recorte", icon: <g><path d="M0 11h4V3h6M7 13V6h2M1 13h2" stroke="#2f6ea5" strokeWidth="1.500" />{bulb}</g> },
  { label: "Ocultar", icon: <path d="M0 4q3-3 4 2M1 5l5 6c2 1 4-1 3-3l-3-1M9 8l3 4c3 0 4-3 2-5l-4-4 3-1" /> },
  { label: "Revelar", icon: <path d="M7 13v-3Q5 8 5.500 6t2.500-2 2.500 2-1.500 4v3z" stroke="#3b83c0" fill="#d8ebf8" /> },
  { label: "Propiedades temporales", icon: <g><path d="M1.500 3.500h12v9h-12z" strokeDasharray="3 1" strokeWidth="1.300" /><path d="M8.500 6.500h6v8h-6zM10 9h3M10 12h3" fill="#eee" /></g> },
  { label: "Restricciones", icon: <g><path d="M1 13V5l4-2h9v8M1 7h12M1 10h12M4 4v9M8 4v9" stroke="#8a4a2b" /><circle cx="11.500" cy="6" r="3" fill="#f6cd5f" stroke="#d99a2b" /></g> },
];

function Viewport() {
  return (
    <main className="flex min-w-0 flex-1 flex-col border-l-2 border-t-2 border-[#727272]">
      <div className="flex min-h-0 flex-1">
        <div className="relative min-w-0 flex-1 overflow-hidden bg-white">
          <FloorPlan />
          <div className="absolute right-[3px] top-2 flex gap-[5px]">
            <button aria-label="Minimizar vista"><Icon size={13}><path d="M.5 5.500h11v3H.5z" /></Icon></button>
            <button aria-label="Restaurar vista"><Icon size={13}><path d="M3.500 2.500v-2h8v8h-2M1.500 2.500h8v8h-8zM4.500 5.500h2v2h-2z" strokeWidth="1.200" /></Icon></button>
            <button aria-label="Cerrar vista"><Icon size={13}><path d="M1 .5h3L6.500 3 9 .5h3L8.500 5.500 12 10.500H9L6.500 8 4 10.500H1l3.500-5z" strokeWidth="1.200" /></Icon></button>
          </div>
          <NavigationBar />
          <div className="absolute bottom-[3px] left-2">
            <Icon w={28} h={14}><path d="M1 1h25v12H1z" stroke="#e58a45" strokeWidth="2" /><path d="M4.500 3.500v7l6-3.500z" stroke="#6bb58b" /><path d="M13 3.500v7l6-3.500z" stroke="#5aa6dd" /><path d="M22.500 3v8" stroke="#555" strokeWidth="1.500" /></Icon>
            <p className="font-[Lato] text-[12px] font-bold leading-[14px] text-[#444]">videocursos.co</p>
          </div>
        </div>
        <div className="flex w-[18px] flex-col items-center bg-[#ededed] py-1">
          <Chevron dir="up" />
          <div className="mt-[225px] h-[17px] w-[15px] bg-[#c9c9c9]" />
          <span className="mt-auto"><Chevron dir="down" /></span>
        </div>
      </div>
      <div className="flex h-[19px] shrink-0 items-center bg-[#eee] pb-px">
        <span className="w-[76px] pl-[25px] text-[12px] leading-4">1 : 96</span>
        {viewTools.map((tool) => (
          <button key={tool.label} aria-label={tool.label} className="flex w-[21px] shrink-0 justify-center">
            <Icon size={16}>{tool.icon}</Icon>
          </button>
        ))}
        <span className="ml-1"><Chevron dir="left" /></span>
        <div className="flex flex-1 justify-end">
          <div className="mr-[346px] h-4 w-[17px] bg-[#c9c9c9]" />
        </div>
        <Chevron dir="right" />
        <span className="ml-[9px] mr-1"><Grip /></span>
      </div>
    </main>
  );
}

function Grip() {
  return <Icon w={8} h={8} color="none"><path d="M6 0h2v2H6zM6 3h2v2H6zM3 3h2v2H3zM6 6h2v2H6zM3 6h2v2H3zM0 6h2v2H0z" fill="#aaa" /></Icon>;
}

function StatusSelect({ label, value, width }: { label: string; value: string; width: string }) {
  return (
    <div className={`relative h-[21px] shrink-0 ${width}`}>
      <select aria-label={label} className="h-full w-full appearance-none border border-[#ddd] bg-white px-px text-[12px] text-[#777]">
        <option>{value}</option>
      </select>
      <span className="pointer-events-none absolute right-[2px] top-[6px] opacity-50"><Chevron dir="down" /></span>
    </div>
  );
}

function StatusBar() {
  return (
    <footer className="flex h-6 shrink-0 items-center border-t border-[#777] bg-linear-to-b from-[#e6e6e6] to-[#c2c2c2] text-[12px]">
      <p className="w-[488px] shrink-0 whitespace-nowrap pl-[2px]">Cotas : Estilo de cota lineal : Linear - 3/32" Arial</p>
      <Tool label="Subproyectos">
        <Icon><path d="M1.500 8l3-1.500L8 8v6l-3 1.500L1.500 14z" fill="#b7dcf2" stroke="#2d6d99" /><path d="M7 2l4-1 1.500 2H10v3M7 2v3" fill="#cce8c8" stroke="#3a7f39" /><path d="M12 8v8M14.500 7v3l-3-.5M10 7.500v2" /></Icon>
      </Tool>
      <span className="w-[3px]" />
      <StatusSelect label="Subproyecto activo" value="" width="w-[204px]" />
      <button className="ml-2 flex w-[56px] shrink-0 items-center gap-[3px]">
        <Icon><path d="M6 2h9v4H9L7 8V6H5zM4 9l3 3" fill="#eee" stroke="#777" /><path d="M3 16l1-5 2-1 2 6z" fill="#777" stroke="#777" /></Icon>
        :0
      </button>
      <div className="-ml-1 flex shrink-0">
        <Tool label="Opciones de diseño">
          <Icon size={16}><path d="M1.500 1.500h13v13h-13z" fill="#f5f5f5" strokeWidth="1.300" /><path d="M1 3h14M3 6h2M3 9h2M5 12h2M6 6h7M6 9h7M8 12h5" strokeWidth="1.500" /></Icon>
        </Tool>
        <Tool label="Añadir a conjunto">
          <Icon size={15}><path d="M2 1h12v12H2z" fill="#777" stroke="none" /><path d="M1 11h8M6 8l3 3-3 3" stroke="#ddd" strokeWidth="1.500" /></Icon>
        </Tool>
      </div>
      <span className="w-1" />
      <StatusSelect label="Opción de diseño" value="Modelo base" width="w-[155px]" />
      <div className="ml-auto flex items-center gap-1">
        <Icon><path d="M2 4.500q0-2 2.500-2h2q2.500 0 2.500 2t-2.500 2h-2Q2 6.500 2 4.500zM8 4.500q0-2 2.500-2h2q2.500 0 2.500 2t-2.500 2h-2Q8 6.500 8 4.500z" stroke="#d3a01c" strokeWidth="1.500" /><path d="M7.500 6.500v9l2-2 1.500 3 1.500-.5L11 13h2.500z" fill="#fff" stroke="#222" /></Icon>
        <Icon w={7} h={16} color="#3a6b99"><path d="M6 1L3 4v2h3M1 8h5M1 13h5M6 1v14" /></Icon>
        <span className="mr-[3px] self-end"><Grip /></span>
      </div>
    </footer>
  );
}

export default function App() {
  return (
    <div className="flex h-screen flex-col overflow-hidden bg-[#e8916d] px-[7px] pb-[7px] font-['Roboto','Open_Sans',sans-serif] text-[12px] text-[#1e1e1e]">
      <Header />
      <div className="flex h-[95px] shrink-0 bg-[#fcfcfc] pl-[3px] text-[#333]">
        <SelectPanel />
        <DimensionPanel />
        <DetailPanel />
        <TextPanel />
        <TagPanel />
        <ColorFillPanel />
        <SymbolPanel />
      </div>
      <div className="h-[27px] shrink-0 bg-[#e3e3e3]" />
      <div className="flex min-h-0 flex-1 bg-[#ececec]">
        <aside className="flex w-[224px] shrink-0 flex-col pr-[6px]">
          <Properties />
          <Browser />
        </aside>
        <Viewport />
      </div>
      <StatusBar />
    </div>
  );
}
